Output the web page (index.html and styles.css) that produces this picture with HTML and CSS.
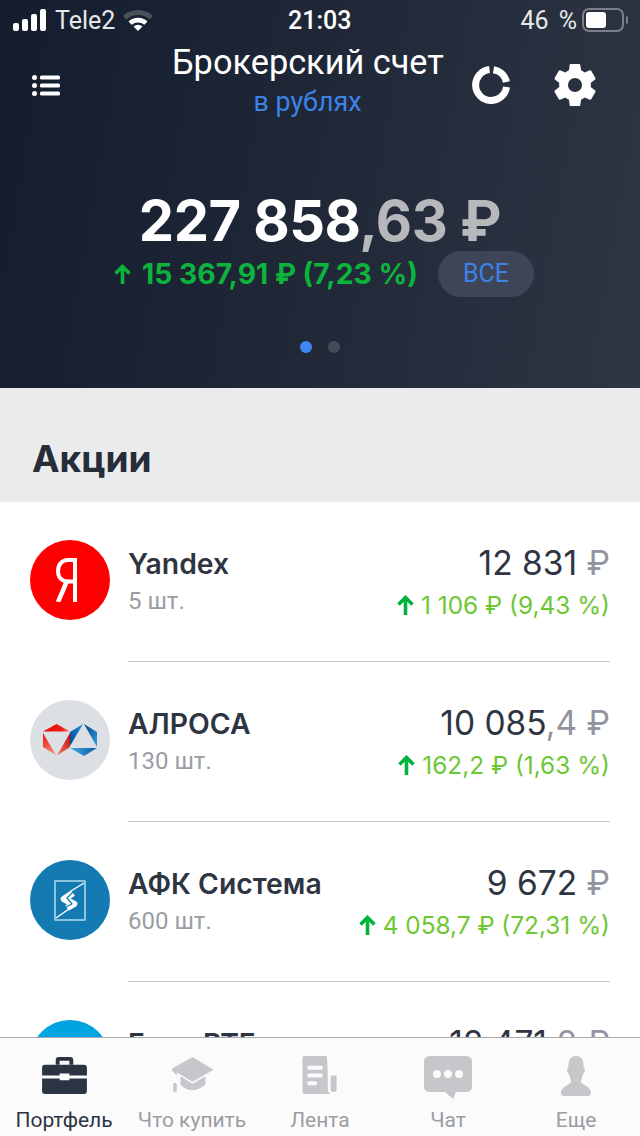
FILE: index.html
```html
<!DOCTYPE html>
<html>

<head>
    <title>Брокерский счет</title>
    <link rel="stylesheet" href="styles.css">
</head>

<body>
    <div class="app">
        <div class="scroll">
            <header class="hero">
                <div class="status">
                    <div class="status-left">
                        <svg class="signal" width="34" height="22" viewBox="0 0 34 22">
                            <rect x="0" y="14" width="6" height="8" rx="2" />
                            <rect x="9" y="10" width="6" height="12" rx="2" />
                            <rect x="18" y="5" width="6" height="17" rx="2" />
                            <rect x="27" y="0" width="6" height="22" rx="2" />
                        </svg>
                        <span>Tele2</span>
                        <svg class="wifi" width="30" height="22" viewBox="0 0 30 22">
                            <path d="M0 7 A22 22 0 0 1 30 7 L26.5 10.6 A17 17 0 0 0 3.500 10.6 Z" fill="#4b5159" />
                            <path d="M5.500 12.500 A14 14 0 0 1 24.500 12.500 L21.300 15.700 A10 10 0 0 0 8.700 15.700 Z" fill="#fff" />
                            <path d="M10.500 17.500 A7 7 0 0 1 19.500 17.500 L15 22 Z" fill="#fff" />
                        </svg>
                    </div>
                    <div class="status-time">21:03</div>
                    <div class="status-right">
                        <span>46 %</span>
                        <div class="battery"><div class="battery-level"></div></div>
                        <div class="battery-nub"></div>
                    </div>
                </div>

                <div class="nav">
                    <svg class="nav-list" width="28" height="21" viewBox="0 0 28 21" fill="#fff">
                        <circle cx="2.500" cy="2.500" r="2.500" />
                        <circle cx="2.500" cy="10.500" r="2.500" />
                        <circle cx="2.500" cy="18.500" r="2.500" />
                        <rect x="8" y="0.500" width="20" height="4" rx="1.500" />
                        <rect x="8" y="8.500" width="20" height="4" rx="1.500" />
                        <rect x="8" y="16.500" width="20" height="4" rx="1.500" />
                    </svg>
                    <div class="nav-title">
                        <div class="nav-name">Брокерский счет</div>
                        <div class="nav-sub">в рублях</div>
                    </div>
                    <svg class="nav-chart" width="38" height="38" viewBox="0 0 38 38" fill="none" stroke="#fff" stroke-width="7">
                        <path d="M17.500 3.600 A15.500 15.500 0 1 0 34.500 21" />
                        <path d="M21.500 3.700 A15.500 15.500 0 0 1 34.400 16" />
                    </svg>
                    <svg class="nav-gear" width="44" height="44" viewBox="2.200 2 19.600 20" fill="#fff">
                        <path d="M19.140 12.940c.04-.3.060-.61.060-.94s-.02-.64-.07-.94l2.030-1.580a.5.5 0 0 0 .12-.61l-1.920-3.320a.5.5 0 0 0-.59-.22l-2.390.96a7 7 0 0 0-1.620-.94l-.36-2.540a.5.5 0 0 0-.48-.41h-3.840a.5.5 0 0 0-.47.41l-.36 2.540c-.59.24-1.130.57-1.620.94l-2.390-.96a.5.5 0 0 0-.59.22L2.740 8.870a.5.5 0 0 0 .12.61l2.030 1.580c-.05.3-.09.63-.09.94s.02.64.07.94l-2.030 1.580a.5.5 0 0 0-.12.61l1.920 3.320c.12.22.37.29.59.22l2.390-.96c.5.380 1.030.7 1.620.94l.36 2.540c.05.24.24.41.48.41h3.840c.24 0 .44-.17.47-.41l.36-2.540c.59-.24 1.130-.56 1.620-.94l2.390.96c.22.08.47 0 .59-.22l1.920-3.320a.5.5 0 0 0-.12-.61zM12 15.200a3.200 3.200 0 1 1 0-6.400 3.200 3.200 0 0 1 0 6.400z" />
                    </svg>
                </div>

                <div class="total">
                    <div class="total-value">227 858<span class="total-dim">,63 ₽</span></div>
                    <div class="total-row">
                        <div class="total-change">
                            <svg class="arrow" width="17" height="20" viewBox="0 0 17 20" fill="none" stroke="#0db43c" stroke-width="3.600">
                                <path d="M8.500 20 V3 M1.500 9.500 L8.500 2.500 L15.500 9.500" />
                            </svg>
                            <span>15 367,91 ₽ (7,23 %)</span>
                        </div>
                        <div class="pill">ВСЕ</div>
                    </div>
                </div>

                <div class="dots">
                    <div class="dot dot-active"></div>
                    <div class="dot"></div>
                </div>
            </header>

            <div class="section-title"><h2>Акции</h2></div>

            <div class="list">
                <div class="item">
                    <div class="logo logo-yandex">
                        <svg class="yandex-mark" width="22" height="44" viewBox="0 0 22 44" fill="none" stroke="#fff" stroke-width="4">
                            <path d="M19 44 V2 H12 C6 2 2 6.500 2 13 C2 19.500 6 23.500 12 23.500 H19" />
                            <path d="M11 23 L2 44" stroke-width="4.500" />
                        </svg>
                    </div>
                    <div class="item-body">
                        <div class="item-info">
                            <div class="item-name">Yandex</div>
                            <div class="item-qty">5 шт.</div>
                        </div>
                        <div class="item-nums">
                            <div class="item-price">12 831 <span class="dim">₽</span></div>
                            <div class="item-change">
                                <svg class="arrow" width="17" height="20" viewBox="0 0 17 20" fill="none" stroke="#00b33a" stroke-width="3.600">
                                    <path d="M8.500 20 V3 M1.500 9.500 L8.500 2.500 L15.500 9.500" />
                                </svg>
                                <span>1 106 ₽ (9,43 %)</span>
                            </div>
                        </div>
                    </div>
                </div>

                <div class="item">
                    <div class="logo logo-alrosa">
                        <svg width="54" height="32" viewBox="0 0 54 32">
                            <defs>
                                <linearGradient id="redTop" x1="0" x2="1" y1="0" y2="0">
                                    <stop offset="0" stop-color="#e50c0c" />
                                    <stop offset="0.7" stop-color="#ee1a14" />
                                    <stop offset="1" stop-color="#f98a72" />
                                </linearGradient>
                                <linearGradient id="redLeft" x1="0" x2="0.700" y1="0" y2="1">
                                    <stop offset="0" stop-color="#e81208" />
                                    <stop offset="1" stop-color="#f98f76" />
                                </linearGradient>
                                <linearGradient id="redRight" x1="0" x2="1" y1="1" y2="0">
                                    <stop offset="0" stop-color="#f77a5a" />
                                    <stop offset="1" stop-color="#b90a10" />
                                </linearGradient>
                                <linearGradient id="blueLeft" x1="0" x2="1" y1="1" y2="0">
                                    <stop offset="0" stop-color="#0a3f88" />
                                    <stop offset="1" stop-color="#1f94dc" />
                                </linearGradient>
                                <linearGradient id="blueRight" x1="0" x2="1" y1="0" y2="1">
                                    <stop offset="0" stop-color="#073f85" />
                                    <stop offset="1" stop-color="#2f9fe0" />
                                </linearGradient>
                                <linearGradient id="blueBottom" x1="0" x2="1" y1="0" y2="0">
                                    <stop offset="0" stop-color="#45a9e4" />
                                    <stop offset="1" stop-color="#0a5aa8" />
                                </linearGradient>
                            </defs>
                            <polygon points="13.500,0 27,7.500 0,7.500" fill="url(#redTop)" />
                            <polygon points="0,9 13,31 0,23" fill="url(#redLeft)" />
                            <polygon points="27,9 14,31.500 27,23" fill="url(#redRight)" />
                            <polygon points="27,8 40,0 27,22" fill="url(#blueLeft)" />
                            <polygon points="41,0 54,8 54,23" fill="url(#blueRight)" />
                            <polygon points="27,24 54,24 41,32" fill="url(#blueBottom)" />
                        </svg>
                    </div>
                    <div class="item-body">
                        <div class="item-info">
                            <div class="item-name">АЛРОСА</div>
                            <div class="item-qty">130 шт.</div>
                        </div>
                        <div class="item-nums">
                            <div class="item-price">10 085<span class="dim">,4 ₽</span></div>
                            <div class="item-change">
                                <svg class="arrow" width="17" height="20" viewBox="0 0 17 20" fill="none" stroke="#00b33a" stroke-width="3.600">
                                    <path d="M8.500 20 V3 M1.500 9.500 L8.500 2.500 L15.500 9.500" />
                                </svg>
                                <span>162,2 ₽ (1,63 %)</span>
                            </div>
                        </div>
                    </div>
                </div>

                <div class="item">
                    <div class="logo logo-afk">
                        <svg width="32" height="41" viewBox="0 0 32 41" fill="none" stroke="#fff" stroke-linejoin="round">
                            <rect x="1" y="1" width="30" height="39" stroke-width="1.500" stroke="#b5dbec" />
                            <path d="M30 3 L17 11 M2 38 L15 29" stroke-width="1.400" />
                            <path d="M19 13 L10 19 L20 24 L13 28" stroke-width="6.500" />
                            <path d="M19 12 L13 18 L18 24 L12 27" stroke-width="1.300" stroke="#137bb2" />
                        </svg>
                    </div>
                    <div class="item-body">
                        <div class="item-info">
                            <div class="item-name">АФК Система</div>
                            <div class="item-qty">600 шт.</div>
                        </div>
                        <div class="item-nums">
                            <div class="item-price">9 672 <span class="dim">₽</span></div>
                            <div class="item-change">
                                <svg class="arrow" width="17" height="20" viewBox="0 0 17 20" fill="none" stroke="#00b33a" stroke-width="3.600">
                                    <path d="M8.500 20 V3 M1.500 9.500 L8.500 2.500 L15.500 9.500" />
                                </svg>
                                <span>4 058,7 ₽ (72,31 %)</span>
                            </div>
                        </div>
                    </div>
                </div>

                <div class="item">
                    <div class="logo logo-vtb"></div>
                    <div class="item-body">
                        <div class="item-info">
                            <div class="item-name">Банк ВТБ</div>
                            <div class="item-qty">10 000 шт.</div>
                        </div>
                        <div class="item-nums">
                            <div class="item-price">12 471<span class="dim">,2 ₽</span></div>
                        </div>
                    </div>
                </div>
            </div>
        </div>

        <nav class="tabs">
            <div class="tab tab-active">
                <div class="tab-icon">
                    <svg width="45" height="38" viewBox="0 0 46 39" fill="#2c3443">
                        <path d="M14 9 V4 Q14 1 17 1 H29 Q32 1 32 4 V9 H28 V5 H18 V9 Z" />
                        <path d="M3 9 H43 Q46 9 46 12 V20 H28 V18 H18 V20 H0 V12 Q0 9 3 9 Z" />
                        <path d="M0 23 H18 V25 H28 V23 H46 V36 Q46 39 43 39 H3 Q0 39 0 36 Z" />
                    </svg>
                </div>
                <span>Портфель</span>
            </div>
            <div class="tab">
                <div class="tab-icon">
                    <svg width="45" height="36" viewBox="0 0 46 39" fill="#c6c7cb">
                        <path d="M23 1 L46 15 L23 28 L6 18 V21 L1 16 Q0 14 2 13 Z" />
                        <path d="M10 22 L23 30 L37 22 V31 Q30 37 23 37 Q15 37 10 31 Z" />
                        <rect x="2" y="29" width="4" height="10" rx="2" />
                    </svg>
                </div>
                <span>Что купить</span>
            </div>
            <div class="tab">
                <div class="tab-icon">
                    <svg width="42" height="38" viewBox="0 0 36 39" fill="#c6c7cb">
                        <path d="M2 0 H25 Q26 8 26 34 Q26 38 30 39 H2 Q0 39 0 37 V2 Q0 0 2 0 Z M7 10 Q5 10 5 12 Q5 14 7 14 H19 Q21 14 21 12 Q21 10 19 10 Z M7 18 Q5 18 5 20 Q5 22 7 22 H19 Q21 22 21 20 Q21 18 19 18 Z M7 26 Q5 26 5 28 Q5 30 7 30 H13 Q15 30 15 28 Q15 26 13 26 Z" fill-rule="evenodd" />
                        <path d="M29 21 Q29 20 31 20 H34 Q35 20 35 21 V34 Q35 37 32 37 Q29 37 29 34 Z" />
                    </svg>
                </div>
                <span>Лента</span>
            </div>
            <div class="tab">
                <div class="tab-icon">
                    <svg width="48" height="43" viewBox="0 0 48 43" fill="#c6c7cb">
                        <path d="M6 0 H42 Q48 0 48 6 V30 Q48 36 42 36 H32 L29 43 L21 36 H6 Q0 36 0 30 V6 Q0 0 6 0 Z M13 14 A4 4 0 1 0 13 22 A4 4 0 1 0 13 14 Z M24 14 A4 4 0 1 0 24 22 A4 4 0 1 0 24 14 Z M35 14 A4 4 0 1 0 35 22 A4 4 0 1 0 35 14 Z" fill-rule="evenodd" />
                    </svg>
                </div>
                <span>Чат</span>
            </div>
            <div class="tab">
                <div class="tab-icon">
                    <svg width="30" height="40" viewBox="0 0 30 40" fill="#c6c7cb">
                        <path d="M15 0 C21 0 23 5 22.500 11 C24.500 12 24.500 16 22 18 C21 22 20 24 20 26 C21 29 30 30 30 37 Q30 40 27 40 H3 Q0 40 0 37 C0 30 9 29 10 26 C10 24 9 22 8 18 C5.500 16 5.500 12 7.500 11 C7 5 9 0 15 0 Z" />
                    </svg>
                </div>
                <span>Еще</span>
            </div>
        </nav>
    </div>
</body>

</html>
```
FILE: styles.css
```css
* {
    box-sizing: border-box;
}

body {
    margin: 0;
    padding: 0;
    font-family: Inter, Roboto, sans-serif;
    background-color: #fff;
}

.app {
    width: 640px;
    height: 1136px;
    display: flex;
    flex-direction: column;
    overflow: hidden;
}

.scroll {
    flex: 1;
    min-height: 0;
    overflow: hidden;
}

/* верхний блок */
.hero {
    height: 388px;
    background: linear-gradient(100deg, #131d2d 0%, #1f2737 45%, #2e3644 100%);
    color: #fff;
    display: flex;
    flex-direction: column;
}

.status {
    height: 40px;
    padding: 0 12px 0 13px;
    display: flex;
    align-items: center;
    justify-content: space-between;
    font-family: Roboto, sans-serif;
    font-size: 25px;
    position: relative;
}

.status-left {
    display: flex;
    align-items: center;
    gap: 8px;
    color: #e6e7e9;
}

.signal {
    fill: #fff;
}

.status-time {
    font-weight: 500;
    position: absolute;
    left: 288px;
}

.status-right {
    display: flex;
    align-items: center;
    gap: 5px;
    color: #e6e7e9;
    word-spacing: 4px;
}

.battery {
    width: 42px;
    height: 24px;
    border: 2px solid #7b7f87;
    border-radius: 7px;
    padding: 2px;
}

.battery-level {
    width: 20px;
    height: 16px;
    background-color: #fff;
    border-radius: 3px;
}

.battery-nub {
    width: 2px;
    height: 8px;
    margin-left: -3px;
    background-color: #7b7f87;
    border-radius: 0 2px 2px 0;
}

.nav {
    height: 90px;
    display: flex;
    align-items: center;
    padding-left: 32px;
}

.nav-title {
    width: 271px;
    margin-left: 112px;
    padding-bottom: 13px;
    text-align: center;
}

.nav-name {
    font-family: Roboto, sans-serif;
    font-size: 34.3px;
    line-height: 44px;
    white-space: nowrap;
}

.nav-sub {
    margin-top: 3px;
    font-family: Roboto, sans-serif;
    font-size: 26.8px;
    line-height: 30px;
    color: #3d83e6;
}

.nav-chart {
    margin-left: 29px;
}

.nav-gear {
    margin-left: 43px;
}

.total {
    margin-top: 57px;
    text-align: center;
}

.total-value {
    font-size: 56px;
    line-height: 68px;
    font-weight: 700;
    letter-spacing: -0.5px;
}

.total-dim {
    color: #b6b8bc;
}

.total-row {
    display: flex;
    align-items: center;
    padding-left: 114px;
    margin-top: -4px;
}

.total-change {
    width: 304px;
    display: flex;
    align-items: center;
    gap: 11px;
    font-size: 28.3px;
    font-weight: 700;
    color: #0db43c;
    white-space: nowrap;
}

.pill {
    width: 96px;
    height: 46px;
    margin-left: 20px;
    border-radius: 23px;
    background-color: #3e4558;
    color: #3d83e6;
    font-family: Roboto, sans-serif;
    font-size: 25px;
    line-height: 46px;
    text-align: center;
}

.dots {
    margin-top: 44px;
    display: flex;
    justify-content: center;
    gap: 16px;
}

.dot {
    width: 12px;
    height: 12px;
    border-radius: 50%;
    background-color: #454b59;
}

.dot-active {
    background-color: #3f86f2;
}

/* акции */
.section-title {
    height: 114px;
    background-color: #eaebec;
    padding: 46px 32px 0;
}

.section-title h2 {
    margin: 0;
    font-size: 37px;
    line-height: 50px;
    font-weight: 700;
    color: #262c38;
}

.list {
    background-color: #fff;
}

.item {
    height: 160px;
    display: flex;
    padding-left: 30px;
}

.logo {
    width: 80px;
    height: 80px;
    margin-top: 38px;
    border-radius: 50%;
    flex-shrink: 0;
    display: flex;
    align-items: center;
    justify-content: center;
}

.logo-yandex {
    background-color: #fe0000;
}

.yandex-mark {
    margin-right: 7px;
}

.logo-alrosa {
    background-color: #dcdfe3;
}

.logo-afk {
    background-color: #137bb2;
}

.logo-vtb {
    background-color: #00a4e0;
}

.item-body {
    flex: 1;
    margin-left: 18px;
    margin-right: 30px;
    padding-top: 40px;
    display: flex;
    justify-content: space-between;
    border-bottom: 1px solid #c8c9cc;
}

.item-name {
    font-size: 28.3px;
    line-height: 44px;
    font-weight: 600;
    color: #2e3542;
}

.item-qty {
    font-family: Roboto, sans-serif;
    font-size: 24px;
    line-height: 30px;
    color: #9a9da3;
}

.item-nums {
    text-align: right;
}

.item-price {
    font-size: 33.5px;
    line-height: 42px;
    color: #2e3542;
}

.dim {
    color: #92959d;
}

.item-change {
    margin-top: 3px;
    display: flex;
    align-items: center;
    justify-content: flex-end;
    gap: 7px;
    font-size: 24.4px;
    line-height: 36px;
    color: #6cc832;
}

/* нижнее меню */
.tabs {
    height: 99px;
    flex-shrink: 0;
    display: grid;
    grid-template-columns: repeat(5, 128px);
    background-color: #fbfbfb;
    border-top: 1px solid #a9aaac;
    padding-top: 18px;
}

.tab {
    display: flex;
    flex-direction: column;
    align-items: center;
    font-family: Roboto, sans-serif;
    font-size: 21px;
    line-height: 26px;
    color: #9a9da4;
    white-space: nowrap;
}

.tab-icon {
    height: 51px;
}

.tab-active {
    color: #2c3443;
}
```
